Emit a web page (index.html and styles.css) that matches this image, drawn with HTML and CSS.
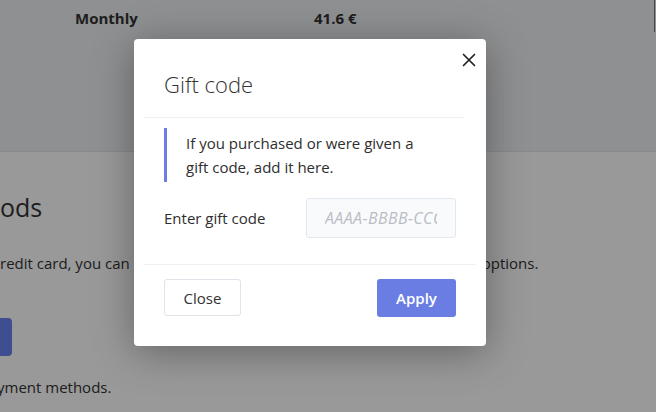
FILE: index.html
```html
<!DOCTYPE html>
<html lang="en">
<head>
<meta charset="utf-8">
<title>Gift code</title>
<link rel="stylesheet" href="styles.css">
</head>
<body>
<div class="page">
  <section class="summary">
    <div class="summary-row">
      <span class="summary-label">Monthly</span>
      <span class="summary-value">41.6 €</span>
    </div>
    <span class="edge-line"></span>
  </section>
  <section class="methods">
    <h2 class="methods-title">ods</h2>
    <p class="methods-text"><span>redit card, you can </span><span class="hidden-run">use a transfer</span><span>options.</span></p>
    <span class="methods-btn"></span>
    <p class="methods-note">yment methods.</p>
  </section>
</div>
<div class="overlay"></div>
<div class="modal" role="dialog" aria-labelledby="gift-title">
  <button class="modal-close" aria-label="Close">
    <svg width="14" height="14" viewBox="0 0 14 14"><path d="M1.5 1.5 L12.5 12.5 M12.5 1.5 L1.5 12.5" stroke="#222" stroke-width="1.7" stroke-linecap="round"/></svg>
  </button>
  <header class="modal-header">
    <h3 id="gift-title" class="modal-title">Gift code</h3>
  </header>
  <div class="modal-body">
    <blockquote class="note">If you purchased or were given a gift code, add it here.</blockquote>
    <div class="field">
      <label class="field-label" for="code">Enter gift code</label>
      <input class="field-input" id="code" type="text" placeholder="AAAA-BBBB-CCCC">
    </div>
  </div>
  <footer class="modal-footer">
    <button class="btn btn-light">Close</button>
    <button class="btn btn-primary">Apply</button>
  </footer>
</div>
</body>
</html>
```
FILE: styles.css
```css
* { box-sizing: border-box; }
html, body { margin: 0; padding: 0; }
body {
  width: 656px;
  height: 412px;
  overflow: hidden;
  position: relative;
  background: #ffffff;
  font-family: "Open Sans", "Noto Sans", "Liberation Sans", sans-serif;
  color: #333;
}
.page { width: 656px; height: 412px; }
.summary {
  height: 152px;
  background: #eef0f2;
  border-bottom: 1px solid #e2e4e8;
  position: relative;
}
.summary-row {
  display: flex;
  padding: 8px 0 0 75px;
  font-weight: 700;
  font-size: 15px;
  line-height: 20px;
  color: #333;
}
.summary-label { width: 239px; }
.edge-line {
  position: absolute;
  right: 1px;
  top: 0;
  width: 1px;
  height: 32px;
  background: #777;
}
.methods { padding-top: 38px; }
.methods-title {
  margin: 0;
  font-weight: 400;
  font-size: 25px;
  line-height: 34px;
  color: #333;
}
.methods-text {
  margin: 27px 0 0;
  font-size: 15px;
  line-height: 24px;
  white-space: nowrap;
  display: flex;
}
.hidden-run { width: 352px; flex: none; padding-left: 8px; }
.methods-btn {
  display: block;
  margin-top: 43px;
  width: 12px;
  height: 38px;
  background: #6980f2;
  border-radius: 0 4px 4px 0;
}
.methods-note {
  margin: 19px 0 0;
  text-indent: -3px;
  font-size: 15px;
  line-height: 24px;
}
.overlay {
  position: absolute;
  inset: 0;
  background: rgba(0, 0, 0, 0.4);
}
.modal {
  position: absolute;
  left: 134px;
  top: 39px;
  width: 352px;
  height: 307px;
  background: #fff;
  border-radius: 4px;
  box-shadow: 0 6px 40px rgba(0, 0, 0, 0.35);
  display: flex;
  flex-direction: column;
}
.modal-close {
  position: absolute;
  top: 14px;
  right: 10px;
  width: 14px;
  height: 14px;
  padding: 0;
  border: 0;
  background: none;
  display: flex;
}
.modal-header {
  padding: 31px 30px 19px 20px;
  margin: 0 22px 0 10px;
  border-bottom: 1px solid #eef0f3;
}
.modal-title {
  margin: 0;
  font-weight: 300;
  font-size: 22px;
  line-height: 28px;
  color: #333;
}
.modal-body { padding: 10px 30px 0; }
.note {
  margin: 0;
  border-left: 3px solid #6a7de3;
  padding: 3px 20px 3px 19px;
  font-size: 15px;
  line-height: 24px;
  color: #2e2e2e;
}
.field {
  display: flex;
  align-items: center;
  margin-top: 16px;
}
.field-label { width: 142px; font-size: 15px; color: #2e2e2e; }
.field-input {
  width: 150px;
  height: 40px;
  border: 1px solid #e3e8ee;
  background: #f9fafc;
  border-radius: 3px;
  padding: 0 18px;
  font-family: inherit;
  font-size: 16px;
  letter-spacing: 0.4px;
  color: #333;
}
.field-input::placeholder { color: #b9bdc5; font-style: italic; }
.modal-footer {
  margin: 26px 10px 0;
  border-top: 1px solid #eef0f3;
  padding: 14px 20px 0;
  display: flex;
  justify-content: space-between;
}
.btn {
  font-family: inherit;
  font-size: 15px;
  height: 38px;
  border-radius: 3px;
  padding: 0 18px;
}
.btn-light {
  width: 77px;
  height: 37px;
  background: #fff;
  border: 1px solid #dfe3ea;
  color: #333;
}
.btn-primary {
  width: 79px;
  background: #6a7de3;
  border: 0;
  color: #fff;
  font-weight: 600;
}
```
